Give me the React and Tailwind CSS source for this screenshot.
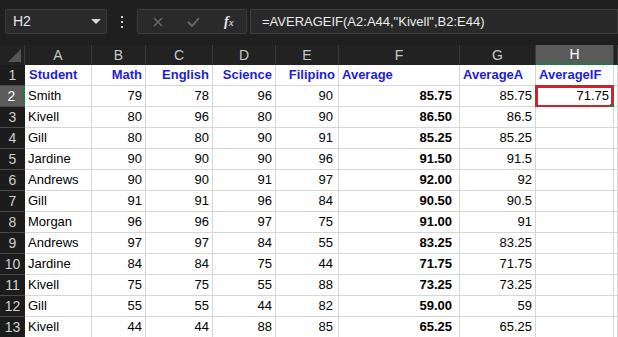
const cols = ["A", "B", "C", "D", "E", "F", "G", "H", "I"];
const widths = ["w-[67px]", "w-[54px]", "w-[67px]", "w-[63px]", "w-[63px]", "w-[121px]", "w-[76px]", "w-[78px]", "flex-1"];

const heads = [
  { t: "Student", a: "text-left pl-[4px]" },
  { t: "Math", a: "text-right pr-[3px]" },
  { t: "English", a: "text-right pr-[3px]" },
  { t: "Science", a: "text-right pr-[3px]" },
  { t: "Filipino", a: "text-right pr-[3px]" },
  { t: "Average", a: "text-left pl-[3px]" },
  { t: "AverageA", a: "text-left pl-[3px]" },
  { t: "AverageIF", a: "text-left pl-[3px]" },
];

const rows = [
  ["Smith", 79, 78, 96, 90, "85.75", "85.75"],
  ["Kivell", 80, 96, 80, 90, "86.50", "86.5"],
  ["Gill", 80, 80, 90, 91, "85.25", "85.25"],
  ["Jardine", 90, 90, 90, 96, "91.50", "91.5"],
  ["Andrews", 90, 90, 91, 97, "92.00", "92"],
  ["Gill", 91, 91, 96, 84, "90.50", "90.5"],
  ["Morgan", 96, 96, 97, 75, "91.00", "91"],
  ["Andrews", 97, 97, 84, 55, "83.25", "83.25"],
  ["Jardine", 84, 84, 75, 44, "71.75", "71.75"],
  ["Kivell", 75, 75, 55, 88, "73.25", "73.25"],
  ["Gill", 55, 55, 44, 82, "59.00", "59"],
  ["Kivell", 44, 44, 88, 85, "65.25", "65.25"],
];

function Toolbar() {
  return (
    <div className="h-[45px] flex items-start pt-[9px] pl-[5px]">
      <div className="w-[102px] h-[25px] bg-[#2a2a2a] border border-[#3c3c3c] rounded-[2px] flex items-center justify-between pl-[7px] pr-[5px] text-[14px] text-[#e6e6e6]">
        <span>H2</span>
        <span className="w-0 h-0 border-l-[5px] border-r-[5px] border-t-[5px] border-l-transparent border-r-transparent border-t-[#d8d8d8]" />
      </div>
      <div className="w-[30px] h-[25px] flex flex-col items-center justify-center gap-[3px]">
        <span className="w-[2px] h-[2px] bg-[#d0d0d0]" />
        <span className="w-[2px] h-[2px] bg-[#d0d0d0]" />
        <span className="w-[2px] h-[2px] bg-[#d0d0d0]" />
      </div>
      <div className="w-[110px] h-[25px] bg-[#2a2a2a] border border-[#3c3c3c] rounded-[2px] flex items-center">
        <svg className="ml-[15px]" width="10" height="10" viewBox="0 0 10 10">
          <path d="M1 1L9 9M9 1L1 9" stroke="#6b6b6b" strokeWidth="1.4" />
        </svg>
        <svg className="ml-[24px]" width="13" height="10" viewBox="0 0 13 10">
          <path d="M1 5L5 9L12 1" stroke="#6b6b6b" strokeWidth="1.8" fill="none" />
        </svg>
        <span className="ml-[24px] text-[14px] italic text-[#e8e8e8]" style={{ fontFamily: '"Liberation Serif", serif' }}>
          <span className="font-bold">f</span>
          <span className="text-[11px]">x</span>
        </span>
      </div>
      <div className="ml-[3px] flex-1 h-[25px] bg-[#292929] border border-[#3c3c3c] flex items-center pl-[11px] text-[13px] text-[#ececec]">
        =AVERAGEIF(A2:A44,"Kivell",B2:E44)
      </div>
    </div>
  );
}

function HeaderRow() {
  return (
    <div className="flex h-[20px] bg-[#222]">
      <div className="w-[25px] flex items-end justify-end pr-[3px] pb-[3px] border-r border-[#3a3a3a]">
        <svg width="13" height="13" viewBox="0 0 13 13">
          <path d="M13 0L13 13L0 13Z" fill="#555" />
        </svg>
      </div>
      {cols.map((c, i) => (
        <div
          key={c}
          className={`${widths[i]} flex items-center justify-center text-[14px] border-r border-[#3a3a3a] ${
            c === "H" ? "bg-[#5a5a5a] text-white border-b-2 border-b-[#1f7a4a]" : "text-[#c8c8c8]"
          }`}
        >
          {i < 8 ? c : ""}
        </div>
      ))}
    </div>
  );
}

function Row({ n, cells, header }) {
  const sel = n === 2;
  return (
    <div className="flex h-[21px]">
      <div
        className={`w-[25px] flex items-center justify-center text-[14px] border-b border-[#4a4a4a] ${
          sel ? "bg-[#5c5c5c] text-white border-r-2 border-r-[#1f7a4a]" : "bg-[#1c1c1c] text-[#d0d0d0]"
        }`}
      >
        {n}
      </div>
      {widths.map((w, i) => {
        let content = null;
        let align = "text-black";
        if (header) {
          if (i < 8) {
            content = heads[i].t;
            align = heads[i].a + " font-bold text-[#1d1dd6]";
          }
        } else if (i < 7) {
          content = cells[i];
          if (i === 0) align = "text-left pl-[3px] text-black";
          else if (i === 4) align = "text-right pr-[5px] text-black";
          else if (i === 5) align = "text-right pr-[7px] font-bold text-black";
          else align = "text-right pr-[3px] text-black";
        } else if (i === 7 && sel) {
          content = "71.75";
          align = "text-right pr-[4px] text-black";
        }
        return (
          <div
            key={i}
            className={`${w} relative bg-white border-r border-b border-[#d6d6d6] text-[13px] leading-[20px] whitespace-nowrap ${align}`}
          >
            {content}
            {sel && i === 7 && (
              <span className="absolute -left-[1px] -top-[1px] -right-[1px] -bottom-[2px] border-[3px] border-[#c8262a]">
                <span className="absolute -right-[3px] -bottom-[3px] w-[4px] h-[4px] bg-[#1f7a4a]" />
              </span>
            )}
          </div>
        );
      })}
    </div>
  );
}

export default function App() {
  return (
    <div
      className="w-[618px] h-[337px] overflow-hidden bg-[#1f1f1f]"
      style={{ fontFamily: '"Liberation Sans", Arial, sans-serif' }}
    >
      <Toolbar />
      <HeaderRow />
      <Row n={1} header />
      {rows.map((r, i) => (
        <Row key={i} n={i + 2} cells={r} />
      ))}
    </div>
  );
}
